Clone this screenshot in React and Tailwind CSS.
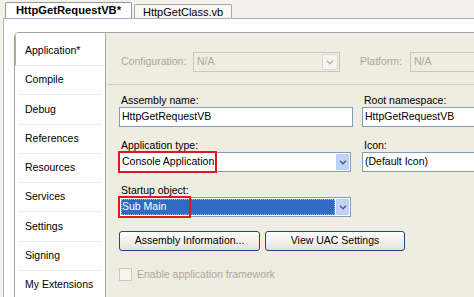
import React from 'react';

const Chevron = ({ color = '#4d6185' }) => (
  <svg width="8" height="5" viewBox="0 0 8 5">
    <path d="M1 0.8 L4 3.8 L7 0.8" fill="none" stroke={color} strokeWidth="1.5" />
  </svg>
);

const sideItems = ['Compile', 'Debug', 'References', 'Resources', 'Services', 'Settings', 'Signing', 'My Extensions'];

const Label = ({ children }) => (
  <div className="h-[14px] leading-[15px] pl-[2px]">{children}</div>
);

const TextBox = ({ children, className = '' }) => (
  <div className={`h-[20px] border border-[#7f9db9] bg-white flex items-center pl-[2px] ${className}`}>
    {children}
  </div>
);

const Combo = ({ children, className = '', selected, highlight }) => (
  <div className={`relative h-[20px] border border-[#7f9db9] bg-white flex items-center p-px ${className}`}>
    {selected ? (
      <div className="flex-1 h-full bg-[#316ac5] text-white flex items-center pl-px outline-1 outline-dotted outline-offset-[-1px] outline-[#ffffff80]">
        {children}
      </div>
    ) : (
      <div className="flex-1 pl-px">{children}</div>
    )}
    <div className="w-[13px] h-full ml-px bg-[#c1d3fb] border border-[#b9cbf3] rounded-[1px] flex items-center justify-center">
      <Chevron />
    </div>
    {highlight}
  </div>
);

export default function App() {
  return (
    <div className="w-[474px] h-[297px] overflow-hidden bg-[#f3f1ea] font-['Liberation_Sans',Arial,sans-serif] text-[10.5px] text-black flex flex-col">
      {/* document tabs */}
      <div className="h-[18px] shrink-0 flex items-end pl-[5px] gap-[2px]">
        <div className="h-[16px] px-[10px] bg-white border border-b-0 border-[#919b9c] rounded-t-[2px] font-bold text-[11.2px] leading-[15px]">
          HttpGetRequestVB*
        </div>
        <div className="h-[14px] px-[8px] bg-[#f8f7f2] border border-b-0 border-[#a9a9a0] rounded-t-[2px] text-[11px] leading-[14px]">
          HttpGetClass.vb
        </div>
      </div>

      <div className="flex-1 flex flex-col ml-[3px] border-t border-l border-t-[#9fb4dd] border-l-[#a3b3cc] bg-white pt-[13px] pl-[10px]">
        <div className="flex-1 flex border-t border-l border-[#a2a2a2] rounded-tl-[5px] overflow-hidden">
          {/* sidebar */}
          <div className="w-[91px] shrink-0 bg-white border-r border-[#aca899] pt-[2px] flex flex-col">
            <div className="h-[31px] flex items-center pl-[9px] pt-px border-l-[2px] border-[#f2a43a] border-b border-b-[#e6e6e6] -ml-px">
              Application*
            </div>
            {sideItems.map((s) => (
              <div key={s} className="h-[29.3px] mx-[3px] flex items-center pl-[7px] border-b border-[#ededed]">
                {s}
              </div>
            ))}
          </div>

          {/* content */}
          <div className="flex-1 bg-[#efece1] pl-[13px] pt-[19px] flex flex-col">
            <div className="flex items-center h-[20px] text-[#aca899]">
              <div className="w-[74px] pl-[2px]">Configuration:</div>
              <div className="w-[147px] h-[20px] border border-[#cbc8b8] bg-[#efece1] flex items-center pl-[3px] p-px">
                <span className="flex-1">N/A</span>
                <div className="w-[16px] h-full bg-[#f5f4ee] border border-[#dcdad0] flex items-center justify-center">
                  <Chevron color="#b5b2a6" />
                </div>
              </div>
              <div className="w-[50px] pl-[20px] box-content">Platform:</div>
              <div className="w-[120px] shrink-0 h-[20px] border border-[#cbc8b8] flex items-center pl-[3px]">N/A</div>
            </div>

            <div className="mt-[12px] h-px bg-[#cfcbbb] -ml-[11px]" />

            <div className="mt-[8px] grid grid-cols-[234px_200px] gap-x-[9px]">
              <div>
                <Label>Assembly name:</Label>
                <TextBox>HttpGetRequestVB</TextBox>
              </div>
              <div>
                <Label>Root namespace:</Label>
                <TextBox>HttpGetRequestVB</TextBox>
              </div>

              <div className="mt-[11px]">
                <Label>Application type:</Label>
                <Combo
                  className="w-[232px]"
                  highlight={<div className="absolute left-[-2px] top-[-2px] w-[99px] h-[22px] border-2 border-[#e0191f]" />}
                >
                  Console Application
                </Combo>
              </div>
              <div className="mt-[11px]">
                <Label>Icon:</Label>
                <TextBox>(Default Icon)</TextBox>
              </div>

              <div className="mt-[11px]">
                <Label>Startup object:</Label>
                <Combo
                  className="w-[232px]"
                  selected
                  highlight={<div className="absolute left-[-2px] top-[-2px] w-[73px] h-[22px] border-2 border-[#e0191f]" />}
                >
                  Sub Main
                </Combo>
              </div>
              <div />
            </div>

            <div className="mt-[14px] flex gap-[5px]">
              <div className="w-[141px] h-[20px] rounded-[3px] border border-[#1c4a7a] bg-gradient-to-b from-white to-[#e6e3d6] flex items-center justify-center">
                Assembly Information...
              </div>
              <div className="w-[140px] h-[20px] rounded-[3px] border border-[#1c4a7a] bg-gradient-to-b from-white to-[#e6e3d6] flex items-center justify-center">
                View UAC Settings
              </div>
            </div>

            <div className="mt-[16px] flex items-center gap-[5px] text-[#aca899]">
              <div className="w-[13px] h-[13px] border border-[#cac8bb] bg-[#f4f3ec]" />
              <span>Enable application framework</span>
            </div>
          </div>
        </div>
      </div>
    </div>
  );
}
